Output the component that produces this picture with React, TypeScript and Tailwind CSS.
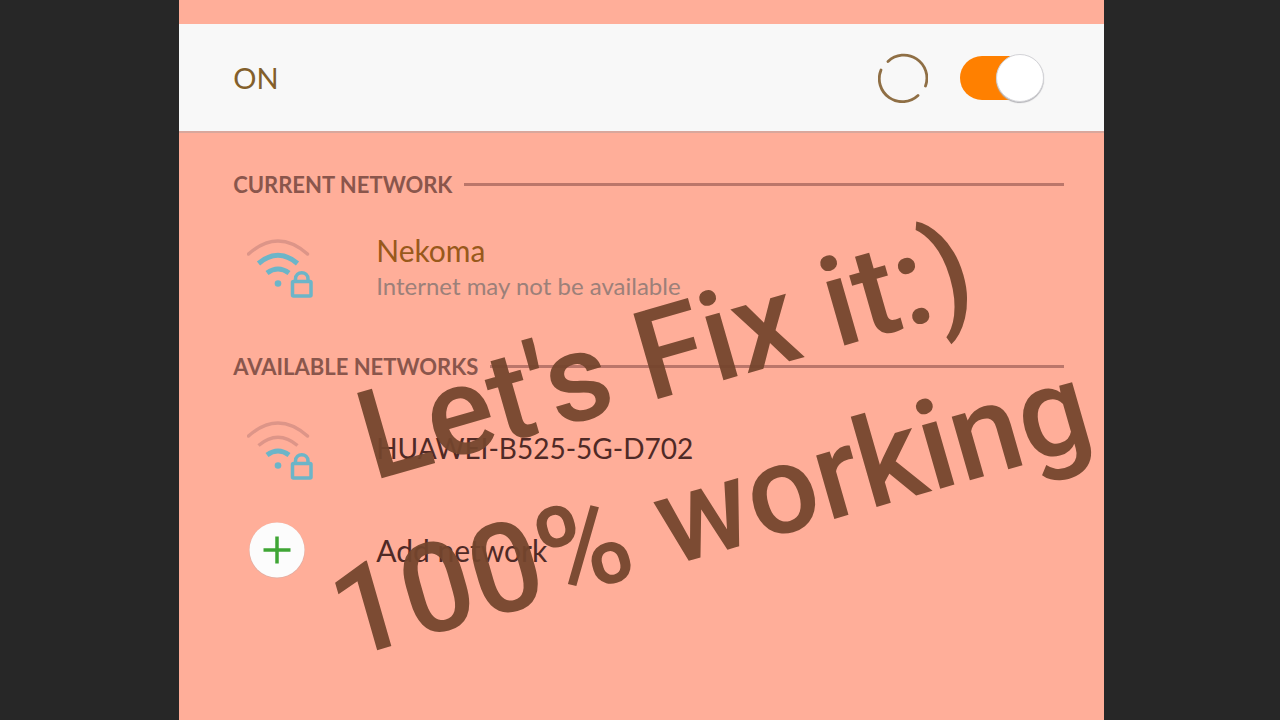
import { useState } from "react";
import type { ReactNode } from "react";

const BLUE = "#6cb5c8";
const FADED = "#dd9588";

const WifiIcon = ({ strength }: { strength: number }) => (
  <svg width="68" height="72" viewBox="0 0 68 72" fill="none" strokeLinecap="round" aria-hidden="true">
    <path d="M1.500 22 Q31 -4 60.500 22" stroke={FADED} strokeWidth="3.500" />
    <path d="M11.500 31.500 Q31 15 50.500 31.500" stroke={strength > 1 ? BLUE : FADED} strokeWidth={strength > 1 ? 5 : 3.5} strokeLinecap="butt" />
    <path d="M20 41 Q31 33 42 41" stroke={BLUE} strokeWidth="5" strokeLinecap="butt" />
    <circle cx="31" cy="51.500" r="3.300" fill={BLUE} />
    <rect x="45.500" y="49.500" width="18.500" height="14.500" rx="1" stroke={BLUE} strokeWidth="3.500" />
    <path d="M48.500 49 V47 C48.500 38.500 61 38.500 61 47 V49" stroke={BLUE} strokeWidth="3.500" />
  </svg>
);

const AddIcon = () => (
  <svg width="62" height="62" viewBox="0 0 62 62" fill="none" aria-hidden="true">
    <circle cx="30" cy="31.500" r="28" fill="#e3aea2" />
    <circle cx="30" cy="31" r="27.500" fill="#fcfcfc" />
    <path d="M30 17.500 V44.500 M16.500 31 H43.500" stroke="#3fa535" strokeWidth="3.500" />
  </svg>
);

const Spinner = () => (
  <svg width="50" height="50" viewBox="0 0 50 50" fill="none" stroke="#8f6f45" strokeWidth="2.800" strokeLinecap="round" aria-hidden="true">
    <path d="M10 8.500 A23 23 0 0 1 47.500 33" />
    <path d="M40 42.500 A23 23 0 0 1 3 17" />
  </svg>
);

const SectionTitle = ({ children }: { children: ReactNode }) => (
  <div className="flex items-center gap-3 h-8">
    <h2 className="text-[22px] font-bold text-[#8a564c] whitespace-nowrap">{children}</h2>
    <div className="flex-1 h-[3px] bg-[#bb766a]"></div>
  </div>
);

const NetworkRow = ({ icon, children }: { icon: ReactNode; children: ReactNode }) => (
  <button type="button" className="flex items-center w-full h-18 text-left">
    <span className="shrink-0 w-[143px] pl-[14px]">{icon}</span>
    <span className="flex flex-col whitespace-nowrap">{children}</span>
  </button>
);

const App = () => {
  const [wifiOn, setWifiOn] = useState(true);
  return (
    <div className="min-h-screen flex bg-[#272727] pl-[14%] pr-[13.75%] font-['Lato','Liberation_Sans',sans-serif]">
      <main className="relative flex-1 bg-[#ffae99] pt-6">
        <header className="flex items-center h-[109px] bg-[#f8f8f8] border-b-2 border-[#d9a79c] pl-[54px] pr-[60px]">
          <label htmlFor="wifiSwitch" className="flex-1 text-[29px] text-[#835f2b]">ON</label>
          <Spinner />
          <span className="relative ml-8 flex items-center w-[84px] h-12">
            <input
              id="wifiSwitch"
              type="checkbox"
              role="switch"
              checked={wifiOn}
              onChange={(ev) => setWifiOn(ev.target.checked)}
              className="peer appearance-none w-20 h-11 rounded-full bg-gray-300 checked:bg-[#ff8000]"
            />
            <span className="pointer-events-none absolute left-0 peer-checked:left-auto peer-checked:right-0 size-12 rounded-full bg-white border border-[#d4d4d8] shadow-[0_1px_1px_#b4b4b8]"></span>
          </span>
        </header>

        <section className="pt-[35px] pl-[54px] pr-10">
          <SectionTitle>CURRENT NETWORK</SectionTitle>
          <div className="pt-8">
            <NetworkRow icon={<WifiIcon strength={2} />}>
              <span className="text-3xl/9 text-[#99591b]">Nekoma</span>
              <span className="text-2xl/9 text-[#9c8079]">Internet may not be available</span>
            </NetworkRow>
          </div>
        </section>

        <section className="pt-[46px] pl-[54px] pr-10">
          <SectionTitle>AVAILABLE NETWORKS</SectionTitle>
          <div className="flex flex-col gap-7 pt-8">
            <NetworkRow icon={<WifiIcon strength={1} />}>
              <span className="pb-1 text-[28px]/9 text-[#4f2a26]">HUAWEI-B525-5G-D702</span>
            </NetworkRow>
            <NetworkRow icon={<AddIcon />}>
              <span className="text-3xl/9 text-[#4f2a26]">Add network</span>
            </NetworkRow>
          </div>
        </section>

        <div className="pointer-events-none absolute inset-0 flex items-center justify-center pl-[92px] pt-[144px]">
          <p className="-rotate-16 text-center font-['Roboto',sans-serif] font-medium text-[125px]/[164px] whitespace-nowrap text-[#74452d] opacity-94">
            Let's Fix it:)
            <br />
            100% working
          </p>
        </div>
      </main>
    </div>
  );
};

export default App;
